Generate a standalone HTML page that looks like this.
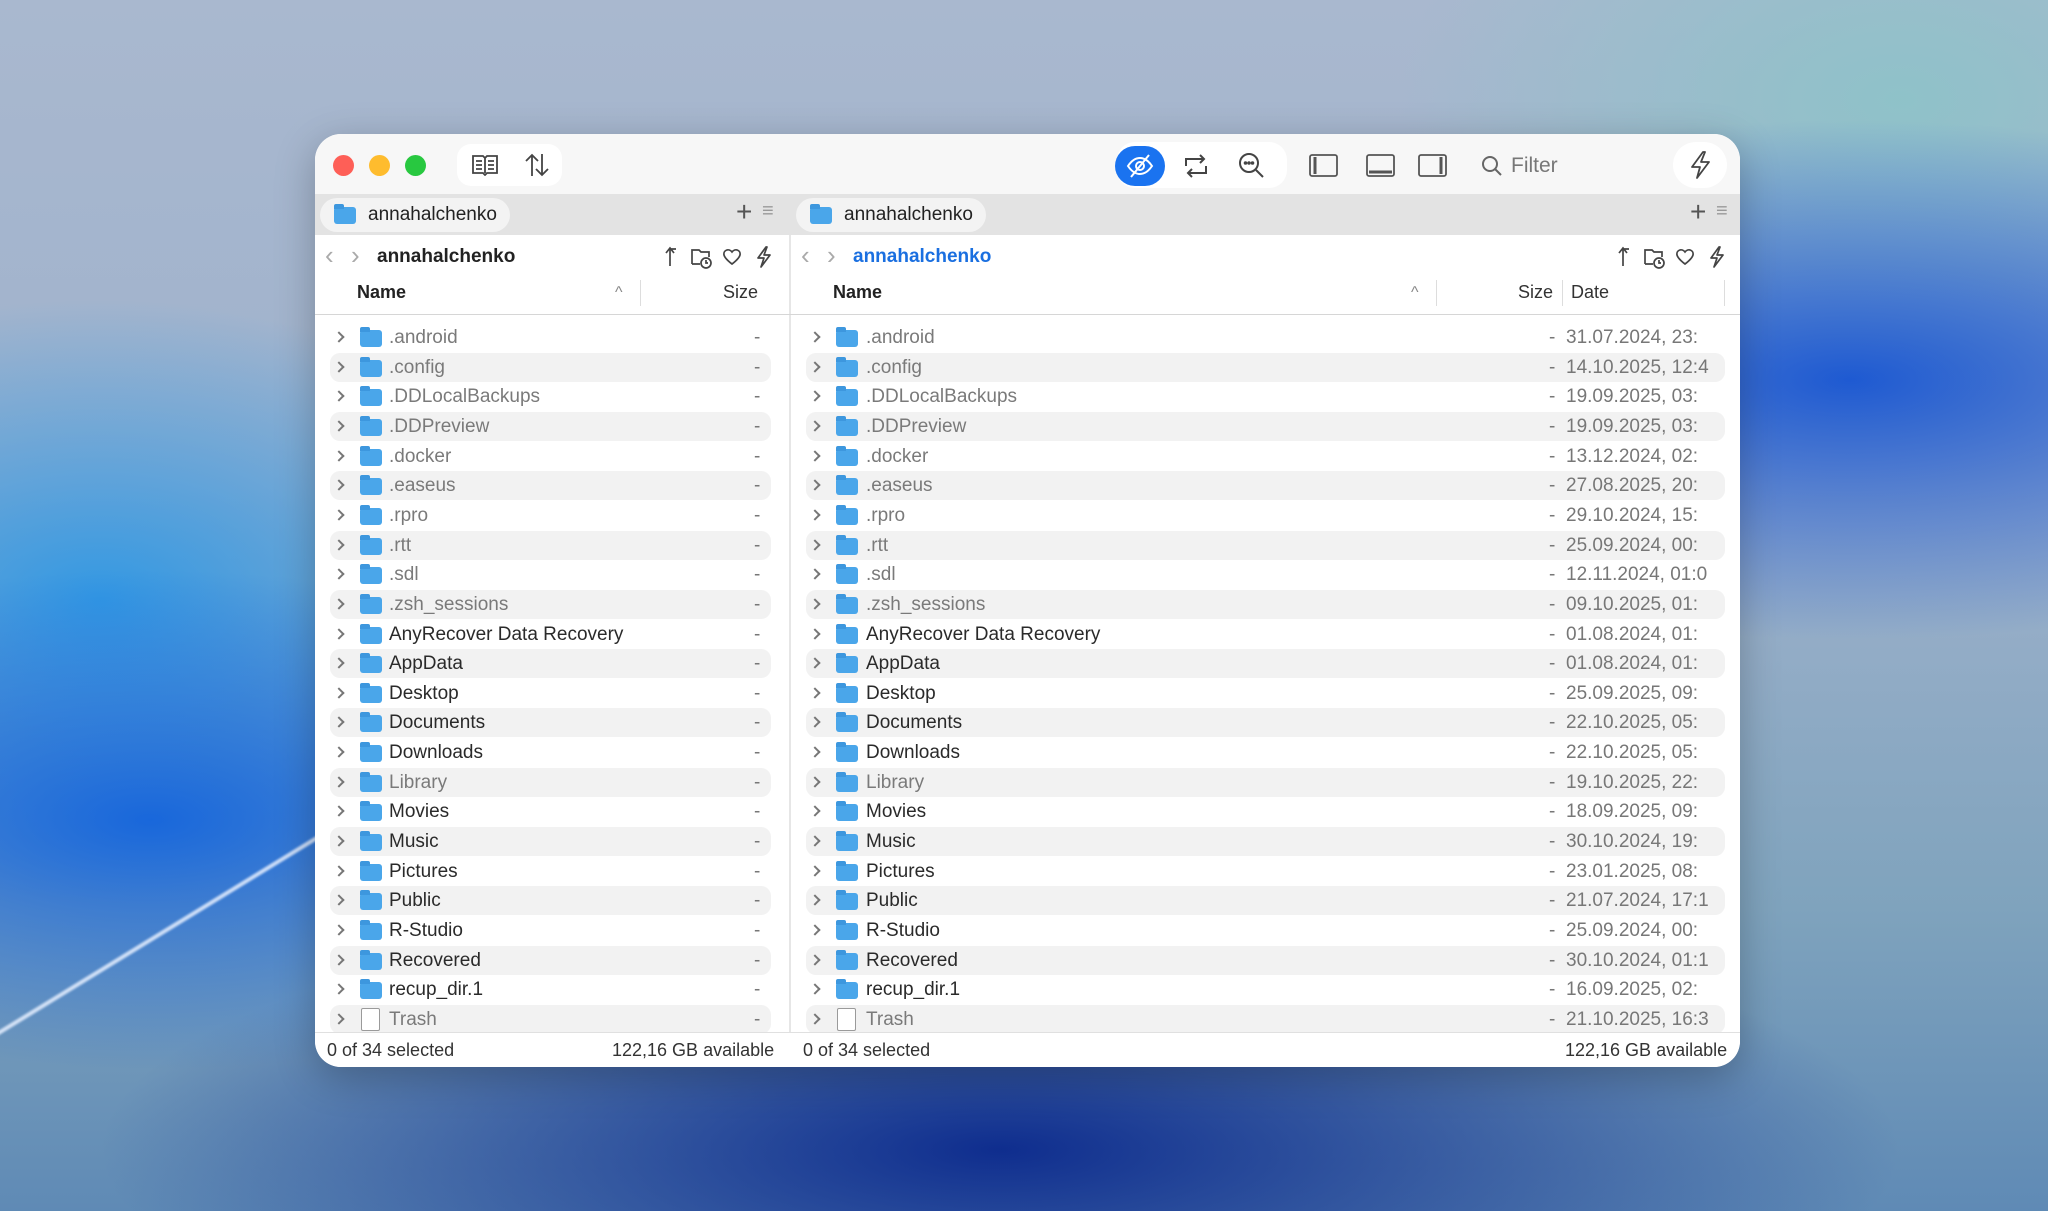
<!DOCTYPE html>
<html><head><meta charset="utf-8"><style>
*{margin:0;padding:0;box-sizing:border-box}
body{width:2048px;height:1211px;overflow:hidden;position:relative;font-family:"Liberation Sans",sans-serif;
background:
radial-gradient(ellipse 700px 260px at 1850px 380px,rgba(16,80,210,.9),rgba(16,80,210,0)),
radial-gradient(ellipse 600px 250px at 150px 820px,rgba(20,100,220,.95),rgba(20,100,220,0)),
radial-gradient(ellipse 500px 300px at 100px 600px,rgba(40,150,230,.9),rgba(40,150,230,0)),
radial-gradient(ellipse 900px 250px at 1000px 1150px,rgba(10,40,140,.95),rgba(10,40,140,0)),
radial-gradient(ellipse 500px 300px at 1900px 100px,rgba(140,195,200,.9),rgba(140,195,200,0)),
linear-gradient(180deg,#a9b8cf 0%,#9fb2cc 40%,#7fa3bd 75%,#5f8ab5 100%);}
.streak{position:absolute;left:-20px;top:1042px;width:420px;height:4px;background:rgba(230,240,255,.85);transform-origin:0 0;transform:rotate(-31.5deg);filter:blur(1px)}
.win{position:absolute;left:315px;top:134px;width:1425px;height:933px;background:#fff;border-radius:26px;overflow:hidden;box-shadow:0 10px 40px rgba(0,0,0,.25)}
.tb{position:absolute;left:0;top:0;width:100%;height:60px;background:#f7f7f7}
.dot{position:absolute;top:21px;width:21px;height:21px;border-radius:50%}
.pill{position:absolute;background:#fff;border-radius:14px}
.tabbar{position:absolute;left:0;top:60px;width:100%;height:41px;background:#e3e3e3}
.tab{position:absolute;top:4px;height:34px;border-radius:17px;background:#f3f3f3;font-size:19px;color:#222;line-height:34px;padding-left:48px}
.fold{position:absolute;width:22px;height:17px;background:#4aa6ea;border-radius:3px}
.fold:before{content:"";position:absolute;left:0;top:-3px;width:10px;height:5px;background:#3d97de;border-radius:2px 2px 0 0}
.t{position:absolute;white-space:nowrap}
.r{position:absolute;height:29px}
.st{position:absolute;top:0;height:29px;border-radius:10px;background:#f2f2f2}
.st[style*="left:15px"]{width:441px!important}
.ch{position:absolute;top:10px;width:8px;height:8px;border-right:2px solid #777;border-top:2px solid #777;transform:rotate(45deg)}
.r .fold{top:7px}
.nm{position:absolute;top:4px;font-size:19px;color:#2a2a2a;white-space:nowrap}
.h{color:#7a7a7a}
.ds{position:absolute;top:4px;font-size:19px;color:#777}
.dt{position:absolute;top:4px;font-size:19px;color:#777;white-space:nowrap;width:158px;overflow:hidden}
.tr{position:absolute;top:3px;width:19px;height:23px;border:1.5px solid #9a9a9a;border-radius:2px;background:#fff}
svg{position:absolute}
</style></head><body>
<div class="streak"></div>
<div class="win">
 <div class="tb">
  <div class="dot" style="left:18px;background:#fe5f57"></div>
  <div class="dot" style="left:54px;background:#febc2e"></div>
  <div class="dot" style="left:90px;background:#28c840"></div>
  <div class="pill" style="left:142px;top:10px;width:105px;height:42px"></div>
  <svg style="left:156px;top:20px" width="28" height="22" viewBox="0 0 28 22" fill="none" stroke="#444" stroke-width="1.8"><path d="M2 2h10l2 2 2-2h10v17H16l-2 2-2-2H2z M14 4v15 M5 7h6M5 11h6M5 15h6M17 7h6M17 11h6M17 15h6"/></svg>
  <svg style="left:208px;top:18px" width="28" height="26" viewBox="0 0 28 26" fill="none" stroke="#444" stroke-width="1.8"><path d="M9 24V3M3 9l6-6 6 6M19 2v21M13 17l6 6 6-6"/></svg>
  <div class="pill" style="left:802px;top:8px;width:170px;height:46px;border-radius:18px"></div>
  <div style="position:absolute;left:800px;top:12px;width:50px;height:40px;border-radius:20px;background:#1a73f0"></div>
  <svg style="left:810px;top:18px" width="30" height="28" viewBox="0 0 30 28" fill="none" stroke="#fff" stroke-width="2"><path d="M3 14c4-6 8-8 12-8s8 2 12 8c-4 6-8 8-12 8s-8-2-12-8z"/><circle cx="15" cy="14" r="4"/><path d="M24 3L6 25"/></svg>
  <svg style="left:866px;top:18px" width="30" height="28" viewBox="0 0 30 28" fill="none" stroke="#444" stroke-width="2"><path d="M5 14V7h18M19 3l4 4-4 4M25 14v7H7M11 25l-4-4 4-4"/></svg>
  <svg style="left:922px;top:17px" width="30" height="30" viewBox="0 0 30 30" fill="none" stroke="#444" stroke-width="2"><circle cx="12" cy="12" r="9"/><path d="M19 19l7 7"/><circle cx="8.5" cy="12" r=".8" fill="#444"/><circle cx="12" cy="12" r=".8" fill="#444"/><circle cx="15.5" cy="12" r=".8" fill="#444"/></svg>
  <svg style="left:994px;top:20px" width="30" height="24" viewBox="0 0 30 24" fill="none" stroke="#555" stroke-width="1.8"><rect x="1" y="1" width="27" height="21" rx="2"/><path d="M6 3v17" stroke-width="3"/></svg>
  <svg style="left:1051px;top:20px" width="30" height="24" viewBox="0 0 30 24" fill="none" stroke="#555" stroke-width="1.8"><rect x="1" y="1" width="27" height="21" rx="2"/><path d="M3 18h23" stroke-width="3"/></svg>
  <svg style="left:1103px;top:20px" width="30" height="24" viewBox="0 0 30 24" fill="none" stroke="#555" stroke-width="1.8"><rect x="1" y="1" width="27" height="21" rx="2"/><path d="M23 3v17" stroke-width="3"/></svg>
  <svg style="left:1165px;top:20px" width="24" height="24" viewBox="0 0 24 24" fill="none" stroke="#666" stroke-width="2"><circle cx="10" cy="10" r="7"/><path d="M15 15l6 6"/></svg>
  <div class="t" style="left:1196px;top:20px;font-size:21px;color:#777">Filter</div>
  <div class="pill" style="left:1358px;top:8px;width:54px;height:46px;border-radius:23px"></div>
  <svg style="left:1372px;top:16px" width="26" height="30" viewBox="0 0 26 30" fill="none" stroke="#444" stroke-width="1.8" stroke-linejoin="round"><path d="M16 2L5 17h8l-3 11 12-16h-8l4-10z"/></svg>
 </div>
 <div class="tabbar">
  <div class="tab" style="left:5px;width:190px"><div class="fold" style="left:14px;top:9px"></div>annahalchenko</div>
  <div class="t" style="left:421px;top:2px;font-size:28px;color:#555">+</div>
  <div class="t" style="left:447px;top:6px;font-size:20px;color:#999">≡</div>
  <div class="tab" style="left:481px;width:190px"><div class="fold" style="left:14px;top:9px"></div>annahalchenko</div>
  <div class="t" style="left:1375px;top:2px;font-size:28px;color:#555">+</div>
  <div class="t" style="left:1401px;top:6px;font-size:20px;color:#999">≡</div>
 </div>
 <div style="position:absolute;left:474px;top:101px;width:2px;height:800px;background:#e6e6e6"></div>
 <div class="t" style="left:10px;top:106px;font-size:26px;color:#aaa">‹</div>
 <div class="t" style="left:36px;top:106px;font-size:26px;color:#aaa">›</div>
 <div class="t" style="left:62px;top:112px;font-size:19px;font-weight:bold;color:#222">annahalchenko</div>
 <div class="t" style="left:486px;top:106px;font-size:26px;color:#aaa">‹</div>
 <div class="t" style="left:512px;top:106px;font-size:26px;color:#aaa">›</div>
 <div class="t" style="left:538px;top:112px;font-size:19px;font-weight:bold;color:#1a6fe0">annahalchenko</div>
 <svg style="left:345px;top:110px" width="130" height="26" viewBox="0 0 130 26" fill="none" stroke="#444" stroke-width="1.7"><path d="M10 22V5h6M6 9l4-5 4 5"/><path d="M32 20V6h7l2 2h8v5M32 20h8"/><circle cx="46" cy="19" r="5"/><path d="M46 16v3h2"/><path d="M72 8c-3-4-9-2-8 3 1 4 8 9 8 9s7-5 8-9c1-5-5-7-8-3z"/><path d="M106 3l-8 11h6l-3 9 9-12h-6l3-8z" stroke-linejoin="round"/></svg>
 <svg style="left:1298px;top:110px" width="130" height="26" viewBox="0 0 130 26" fill="none" stroke="#444" stroke-width="1.7"><path d="M10 22V5h6M6 9l4-5 4 5"/><path d="M32 20V6h7l2 2h8v5M32 20h8"/><circle cx="46" cy="19" r="5"/><path d="M46 16v3h2"/><path d="M72 8c-3-4-9-2-8 3 1 4 8 9 8 9s7-5 8-9c1-5-5-7-8-3z"/><path d="M106 3l-8 11h6l-3 9 9-12h-6l3-8z" stroke-linejoin="round"/></svg>
 <div class="t" style="left:42px;top:148px;font-size:18px;font-weight:bold;color:#222">Name</div>
 <div class="t" style="left:300px;top:150px;font-size:16px;color:#888">^</div>
 <div style="position:absolute;left:325px;top:146px;width:1px;height:26px;background:#ddd"></div>
 <div class="t" style="left:408px;top:148px;font-size:18px;color:#333">Size</div>
 <div class="t" style="left:518px;top:148px;font-size:18px;font-weight:bold;color:#222">Name</div>
 <div class="t" style="left:1096px;top:150px;font-size:16px;color:#888">^</div>
 <div style="position:absolute;left:1121px;top:146px;width:1px;height:26px;background:#ddd"></div>
 <div class="t" style="left:1203px;top:148px;font-size:18px;color:#333">Size</div>
 <div style="position:absolute;left:1247px;top:146px;width:1px;height:26px;background:#ddd"></div>
 <div class="t" style="left:1256px;top:148px;font-size:18px;color:#333">Date</div>
 <div style="position:absolute;left:1409px;top:146px;width:1px;height:26px;background:#ddd"></div>
 <div style="position:absolute;left:0;top:180px;width:100%;height:1px;background:#d6d6d6"></div>

 <div class="r" style="left:0;top:189px;width:100%"><div class="ch" style="left:20px"></div><div class="fold" style="left:45px"></div><div class="nm h" style="left:74px">.android</div><div class="ds" style="left:439px">-</div><div class="ch" style="left:496px"></div><div class="fold" style="left:521px"></div><div class="nm h" style="left:551px">.android</div><div class="ds" style="left:1234px">-</div><div class="dt" style="left:1251px">31.07.2024, 23:</div></div>
 <div class="r" style="left:0;top:218.6px;width:100%"><div class="st" style="left:15px;width:456px"></div><div class="st" style="left:491px;width:919px"></div><div class="ch" style="left:20px"></div><div class="fold" style="left:45px"></div><div class="nm h" style="left:74px">.config</div><div class="ds" style="left:439px">-</div><div class="ch" style="left:496px"></div><div class="fold" style="left:521px"></div><div class="nm h" style="left:551px">.config</div><div class="ds" style="left:1234px">-</div><div class="dt" style="left:1251px">14.10.2025, 12:4</div></div>
 <div class="r" style="left:0;top:248.3px;width:100%"><div class="ch" style="left:20px"></div><div class="fold" style="left:45px"></div><div class="nm h" style="left:74px">.DDLocalBackups</div><div class="ds" style="left:439px">-</div><div class="ch" style="left:496px"></div><div class="fold" style="left:521px"></div><div class="nm h" style="left:551px">.DDLocalBackups</div><div class="ds" style="left:1234px">-</div><div class="dt" style="left:1251px">19.09.2025, 03:</div></div>
 <div class="r" style="left:0;top:277.9px;width:100%"><div class="st" style="left:15px;width:456px"></div><div class="st" style="left:491px;width:919px"></div><div class="ch" style="left:20px"></div><div class="fold" style="left:45px"></div><div class="nm h" style="left:74px">.DDPreview</div><div class="ds" style="left:439px">-</div><div class="ch" style="left:496px"></div><div class="fold" style="left:521px"></div><div class="nm h" style="left:551px">.DDPreview</div><div class="ds" style="left:1234px">-</div><div class="dt" style="left:1251px">19.09.2025, 03:</div></div>
 <div class="r" style="left:0;top:307.6px;width:100%"><div class="ch" style="left:20px"></div><div class="fold" style="left:45px"></div><div class="nm h" style="left:74px">.docker</div><div class="ds" style="left:439px">-</div><div class="ch" style="left:496px"></div><div class="fold" style="left:521px"></div><div class="nm h" style="left:551px">.docker</div><div class="ds" style="left:1234px">-</div><div class="dt" style="left:1251px">13.12.2024, 02:</div></div>
 <div class="r" style="left:0;top:337.2px;width:100%"><div class="st" style="left:15px;width:456px"></div><div class="st" style="left:491px;width:919px"></div><div class="ch" style="left:20px"></div><div class="fold" style="left:45px"></div><div class="nm h" style="left:74px">.easeus</div><div class="ds" style="left:439px">-</div><div class="ch" style="left:496px"></div><div class="fold" style="left:521px"></div><div class="nm h" style="left:551px">.easeus</div><div class="ds" style="left:1234px">-</div><div class="dt" style="left:1251px">27.08.2025, 20:</div></div>
 <div class="r" style="left:0;top:366.9px;width:100%"><div class="ch" style="left:20px"></div><div class="fold" style="left:45px"></div><div class="nm h" style="left:74px">.rpro</div><div class="ds" style="left:439px">-</div><div class="ch" style="left:496px"></div><div class="fold" style="left:521px"></div><div class="nm h" style="left:551px">.rpro</div><div class="ds" style="left:1234px">-</div><div class="dt" style="left:1251px">29.10.2024, 15:</div></div>
 <div class="r" style="left:0;top:396.5px;width:100%"><div class="st" style="left:15px;width:456px"></div><div class="st" style="left:491px;width:919px"></div><div class="ch" style="left:20px"></div><div class="fold" style="left:45px"></div><div class="nm h" style="left:74px">.rtt</div><div class="ds" style="left:439px">-</div><div class="ch" style="left:496px"></div><div class="fold" style="left:521px"></div><div class="nm h" style="left:551px">.rtt</div><div class="ds" style="left:1234px">-</div><div class="dt" style="left:1251px">25.09.2024, 00:</div></div>
 <div class="r" style="left:0;top:426.2px;width:100%"><div class="ch" style="left:20px"></div><div class="fold" style="left:45px"></div><div class="nm h" style="left:74px">.sdl</div><div class="ds" style="left:439px">-</div><div class="ch" style="left:496px"></div><div class="fold" style="left:521px"></div><div class="nm h" style="left:551px">.sdl</div><div class="ds" style="left:1234px">-</div><div class="dt" style="left:1251px">12.11.2024, 01:0</div></div>
 <div class="r" style="left:0;top:455.8px;width:100%"><div class="st" style="left:15px;width:456px"></div><div class="st" style="left:491px;width:919px"></div><div class="ch" style="left:20px"></div><div class="fold" style="left:45px"></div><div class="nm h" style="left:74px">.zsh_sessions</div><div class="ds" style="left:439px">-</div><div class="ch" style="left:496px"></div><div class="fold" style="left:521px"></div><div class="nm h" style="left:551px">.zsh_sessions</div><div class="ds" style="left:1234px">-</div><div class="dt" style="left:1251px">09.10.2025, 01:</div></div>
 <div class="r" style="left:0;top:485.5px;width:100%"><div class="ch" style="left:20px"></div><div class="fold" style="left:45px"></div><div class="nm" style="left:74px">AnyRecover Data Recovery</div><div class="ds" style="left:439px">-</div><div class="ch" style="left:496px"></div><div class="fold" style="left:521px"></div><div class="nm" style="left:551px">AnyRecover Data Recovery</div><div class="ds" style="left:1234px">-</div><div class="dt" style="left:1251px">01.08.2024, 01:</div></div>
 <div class="r" style="left:0;top:515.1px;width:100%"><div class="st" style="left:15px;width:456px"></div><div class="st" style="left:491px;width:919px"></div><div class="ch" style="left:20px"></div><div class="fold" style="left:45px"></div><div class="nm" style="left:74px">AppData</div><div class="ds" style="left:439px">-</div><div class="ch" style="left:496px"></div><div class="fold" style="left:521px"></div><div class="nm" style="left:551px">AppData</div><div class="ds" style="left:1234px">-</div><div class="dt" style="left:1251px">01.08.2024, 01:</div></div>
 <div class="r" style="left:0;top:544.8px;width:100%"><div class="ch" style="left:20px"></div><div class="fold" style="left:45px"></div><div class="nm" style="left:74px">Desktop</div><div class="ds" style="left:439px">-</div><div class="ch" style="left:496px"></div><div class="fold" style="left:521px"></div><div class="nm" style="left:551px">Desktop</div><div class="ds" style="left:1234px">-</div><div class="dt" style="left:1251px">25.09.2025, 09:</div></div>
 <div class="r" style="left:0;top:574.4px;width:100%"><div class="st" style="left:15px;width:456px"></div><div class="st" style="left:491px;width:919px"></div><div class="ch" style="left:20px"></div><div class="fold" style="left:45px"></div><div class="nm" style="left:74px">Documents</div><div class="ds" style="left:439px">-</div><div class="ch" style="left:496px"></div><div class="fold" style="left:521px"></div><div class="nm" style="left:551px">Documents</div><div class="ds" style="left:1234px">-</div><div class="dt" style="left:1251px">22.10.2025, 05:</div></div>
 <div class="r" style="left:0;top:604.1px;width:100%"><div class="ch" style="left:20px"></div><div class="fold" style="left:45px"></div><div class="nm" style="left:74px">Downloads</div><div class="ds" style="left:439px">-</div><div class="ch" style="left:496px"></div><div class="fold" style="left:521px"></div><div class="nm" style="left:551px">Downloads</div><div class="ds" style="left:1234px">-</div><div class="dt" style="left:1251px">22.10.2025, 05:</div></div>
 <div class="r" style="left:0;top:633.7px;width:100%"><div class="st" style="left:15px;width:456px"></div><div class="st" style="left:491px;width:919px"></div><div class="ch" style="left:20px"></div><div class="fold" style="left:45px"></div><div class="nm h" style="left:74px">Library</div><div class="ds" style="left:439px">-</div><div class="ch" style="left:496px"></div><div class="fold" style="left:521px"></div><div class="nm h" style="left:551px">Library</div><div class="ds" style="left:1234px">-</div><div class="dt" style="left:1251px">19.10.2025, 22:</div></div>
 <div class="r" style="left:0;top:663.4px;width:100%"><div class="ch" style="left:20px"></div><div class="fold" style="left:45px"></div><div class="nm" style="left:74px">Movies</div><div class="ds" style="left:439px">-</div><div class="ch" style="left:496px"></div><div class="fold" style="left:521px"></div><div class="nm" style="left:551px">Movies</div><div class="ds" style="left:1234px">-</div><div class="dt" style="left:1251px">18.09.2025, 09:</div></div>
 <div class="r" style="left:0;top:693px;width:100%"><div class="st" style="left:15px;width:456px"></div><div class="st" style="left:491px;width:919px"></div><div class="ch" style="left:20px"></div><div class="fold" style="left:45px"></div><div class="nm" style="left:74px">Music</div><div class="ds" style="left:439px">-</div><div class="ch" style="left:496px"></div><div class="fold" style="left:521px"></div><div class="nm" style="left:551px">Music</div><div class="ds" style="left:1234px">-</div><div class="dt" style="left:1251px">30.10.2024, 19:</div></div>
 <div class="r" style="left:0;top:722.7px;width:100%"><div class="ch" style="left:20px"></div><div class="fold" style="left:45px"></div><div class="nm" style="left:74px">Pictures</div><div class="ds" style="left:439px">-</div><div class="ch" style="left:496px"></div><div class="fold" style="left:521px"></div><div class="nm" style="left:551px">Pictures</div><div class="ds" style="left:1234px">-</div><div class="dt" style="left:1251px">23.01.2025, 08:</div></div>
 <div class="r" style="left:0;top:752.3px;width:100%"><div class="st" style="left:15px;width:456px"></div><div class="st" style="left:491px;width:919px"></div><div class="ch" style="left:20px"></div><div class="fold" style="left:45px"></div><div class="nm" style="left:74px">Public</div><div class="ds" style="left:439px">-</div><div class="ch" style="left:496px"></div><div class="fold" style="left:521px"></div><div class="nm" style="left:551px">Public</div><div class="ds" style="left:1234px">-</div><div class="dt" style="left:1251px">21.07.2024, 17:1</div></div>
 <div class="r" style="left:0;top:782px;width:100%"><div class="ch" style="left:20px"></div><div class="fold" style="left:45px"></div><div class="nm" style="left:74px">R-Studio</div><div class="ds" style="left:439px">-</div><div class="ch" style="left:496px"></div><div class="fold" style="left:521px"></div><div class="nm" style="left:551px">R-Studio</div><div class="ds" style="left:1234px">-</div><div class="dt" style="left:1251px">25.09.2024, 00:</div></div>
 <div class="r" style="left:0;top:811.6px;width:100%"><div class="st" style="left:15px;width:456px"></div><div class="st" style="left:491px;width:919px"></div><div class="ch" style="left:20px"></div><div class="fold" style="left:45px"></div><div class="nm" style="left:74px">Recovered</div><div class="ds" style="left:439px">-</div><div class="ch" style="left:496px"></div><div class="fold" style="left:521px"></div><div class="nm" style="left:551px">Recovered</div><div class="ds" style="left:1234px">-</div><div class="dt" style="left:1251px">30.10.2024, 01:1</div></div>
 <div class="r" style="left:0;top:841.3px;width:100%"><div class="ch" style="left:20px"></div><div class="fold" style="left:45px"></div><div class="nm" style="left:74px">recup_dir.1</div><div class="ds" style="left:439px">-</div><div class="ch" style="left:496px"></div><div class="fold" style="left:521px"></div><div class="nm" style="left:551px">recup_dir.1</div><div class="ds" style="left:1234px">-</div><div class="dt" style="left:1251px">16.09.2025, 02:</div></div>
 <div class="r" style="left:0;top:870.9px;width:100%"><div class="st" style="left:15px;width:456px"></div><div class="st" style="left:491px;width:919px"></div><div class="ch" style="left:20px"></div><div class="tr" style="left:46px"></div><div class="nm h" style="left:74px">Trash</div><div class="ds" style="left:439px">-</div><div class="ch" style="left:496px"></div><div class="tr" style="left:522px"></div><div class="nm h" style="left:551px">Trash</div><div class="ds" style="left:1234px">-</div><div class="dt" style="left:1251px">21.10.2025, 16:3</div></div>

 <div style="position:absolute;left:0;top:898px;width:100%;height:35px;background:#fff;border-top:1px solid #e0e0e0"></div>
 <div class="t" style="left:12px;top:906px;font-size:18px;color:#333">0 of 34 selected</div>
 <div class="t" style="left:297px;top:906px;font-size:18px;color:#333">122,16 GB available</div>
 <div class="t" style="left:488px;top:906px;font-size:18px;color:#333">0 of 34 selected</div>
 <div class="t" style="left:1250px;top:906px;font-size:18px;color:#333">122,16 GB available</div>
</div>
</body></html>
